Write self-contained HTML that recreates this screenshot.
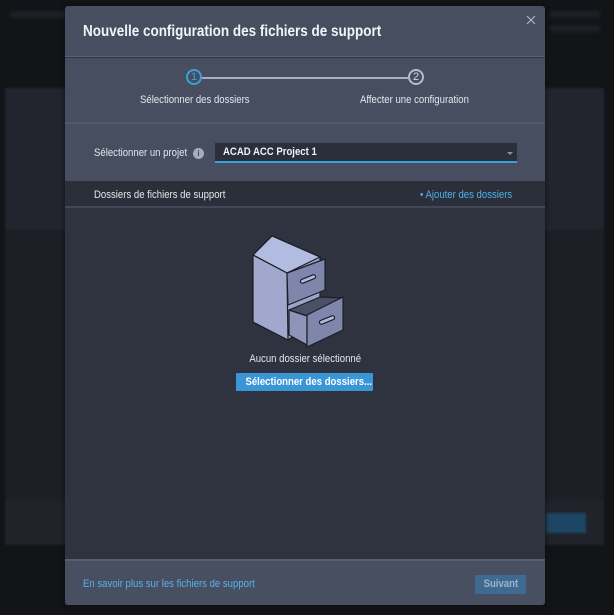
<!DOCTYPE html>
<html><head><meta charset="utf-8"><style>
*{margin:0;padding:0;box-sizing:border-box}
body{width:614px;height:615px;background:#121418;position:relative;overflow:hidden;font-family:"Liberation Sans",sans-serif;color:#dfe3ea}
.s{display:inline-block;transform:scaleX(.87);transform-origin:left center;white-space:nowrap}
.sc{display:inline-block;transform:scaleX(.87);transform-origin:center center;white-space:nowrap}
.bgd{position:absolute;left:5px;top:88px;width:599px;height:457px;background:#1c1f25;filter:blur(1px)}
.bgd .t{position:absolute;left:0;top:0;width:100%;height:142px;background:#22252d}
.bgd .f{position:absolute;left:0;bottom:0;width:100%;height:45px;background:#20232a}
.bgd .btn{position:absolute;right:18px;bottom:12px;width:40px;height:20px;background:#1d4564}
.bl{position:absolute;height:5px;background:#22252c;filter:blur(2px)}
.m{position:absolute;left:65px;top:6px;width:480px;height:599px;background:#2f3340;border-radius:3px;overflow:hidden;box-shadow:0 0 6px rgba(0,0,0,.5)}
.hd{position:absolute;left:0;top:0;width:100%;height:51px;background:#464e60;border-bottom:1px solid #5a6275}
.hd h1{position:absolute;left:18px;top:17px;font-size:15.5px;font-weight:bold;color:#f2f4f7}
.x{position:absolute;right:8px;top:8px;width:12px;height:12px}
.st{position:absolute;left:0;top:52px;width:100%;height:66px;background:#464e60;border-bottom:2px solid #525a6d}
.c{position:absolute;width:16px;height:16px;border-radius:50%;font-size:11px;text-align:center;line-height:13px}
.lbl{position:absolute;font-size:11px;color:#e4e7ec;white-space:nowrap}
.pr{position:absolute;left:0;top:118px;width:100%;height:57px;background:#464e60}
.dd{position:absolute;left:150px;top:19px;width:302px;height:20px;background:#2b2f3b;border-bottom:2px solid #3aa0dc;font-size:11px;font-weight:bold;color:#f0f2f5;padding:3px 0 0 8px}
.fh{position:absolute;left:0;top:175px;width:100%;height:27px;background:#2b2f3a;border-bottom:2px solid #424857}
.ft{position:absolute;left:0;top:553px;width:100%;height:46px;background:#474f61;border-top:2px solid #565e70}
</style></head><body>
<div class="bl" style="left:10px;top:12px;width:60px"></div>
<div class="bl" style="left:550px;top:12px;width:50px"></div>
<div class="bl" style="left:550px;top:26px;width:50px"></div>
<div class="bgd"><div class="t"></div><div class="f"></div><div class="btn"></div></div>
<div class="m">
 <div class="hd"><h1><span class="s">Nouvelle configuration des fichiers de support</span></h1>
 <svg class="x" viewBox="0 0 12 12"><path d="M2 2L10 10M10 2L2 10" stroke="#aeb5c2" stroke-width="1.2"/></svg></div>
 <div class="st">
  <div style="position:absolute;left:137px;top:19px;width:214px;height:2px;background:#a9afbb"></div>
  <div class="c" style="left:121px;top:11px;border:2px solid #3aa0dc;color:#3aa0dc;background:#464e60">1</div>
  <div class="c" style="left:343px;top:11px;border:2px solid #b6bcc7;color:#d4d8df;background:#464e60">2</div>
  <div class="lbl" style="left:75px;top:36px"><span class="s">Sélectionner des dossiers</span></div>
  <div class="lbl" style="left:295px;top:36px"><span class="s">Affecter une configuration</span></div>
 </div>
 <div class="pr">
  <div class="lbl" style="left:29px;top:23px"><span class="s">Sélectionner un projet</span></div>
  <div style="position:absolute;left:128px;top:24px;width:11px;height:11px;border-radius:50%;background:#a6adb9;color:#464e60;font-size:8px;font-weight:bold;text-align:center;line-height:11px">i</div>
  <div class="dd"><span class="s">ACAD ACC Project 1</span></div>
  <div style="position:absolute;left:442px;top:28px;border:3px solid transparent;border-top:3px solid #8b92a0"></div>
 </div>
 <div class="fh">
  <div class="lbl" style="left:29px;top:8px"><span class="s">Dossiers de fichiers de support</span></div>
  <div class="lbl" style="left:355px;top:8px;color:#4fb0ea"><span class="s">• Ajouter des dossiers</span></div>
 </div>
 <svg style="position:absolute;left:175px;top:226px" width="110" height="120" viewBox="240 232 110 120">
  <g stroke="#1b1e26" stroke-width="1.2" stroke-linejoin="round">
   <polygon points="253,255 272,236 320,257 320,318 288,340 253,322" fill="#9ba4c9"/>
   <polygon points="253,255 272,236 320,257 287,273" fill="#b2bbe0"/>
   <polygon points="253,255 287,273 288,340 253,322" fill="#a0a9cd"/>
   <polygon points="287,273 325,259 325,290 288,305" fill="#7e87ab"/>
   <polygon points="289,310 320,297 343,298 307,316" fill="#4a5066"/>
   <polygon points="289,310 307,316 307,345 289,335" fill="#8d95b8"/>
   <polygon points="307,315 343,297 343,330 307,347" fill="#7e87ab"/>
   <rect x="300" y="277" width="16" height="4" rx="2" transform="rotate(-22 308 279)" fill="#b2bbe0"/>
   <rect x="319" y="318" width="16" height="4" rx="2" transform="rotate(-22 327 320)" fill="#b2bbe0"/>
  </g>
 </svg>
 <div class="lbl" style="left:0;width:100%;text-align:center;top:347px"><span class="sc">Aucun dossier sélectionné</span></div>
 <div style="position:absolute;left:171px;top:367px;width:137px;height:18px;background:#3a96d6;color:#fff;font-size:11px;font-weight:bold;text-align:center;line-height:18px;border-radius:1px;white-space:nowrap"><span class="sc">Sélectionner des dossiers...</span></div>
 <div class="ft">
  <div class="lbl" style="left:18px;top:17px;color:#58b2ea"><span class="s">En savoir plus sur les fichiers de support</span></div>
  <div style="position:absolute;left:410px;top:14px;width:51px;height:19px;background:#3f6b92;color:#9fb3c6;font-size:11px;font-weight:bold;text-align:center;line-height:19px"><span class="sc">Suivant</span></div>
 </div>
</div>
</body></html>
